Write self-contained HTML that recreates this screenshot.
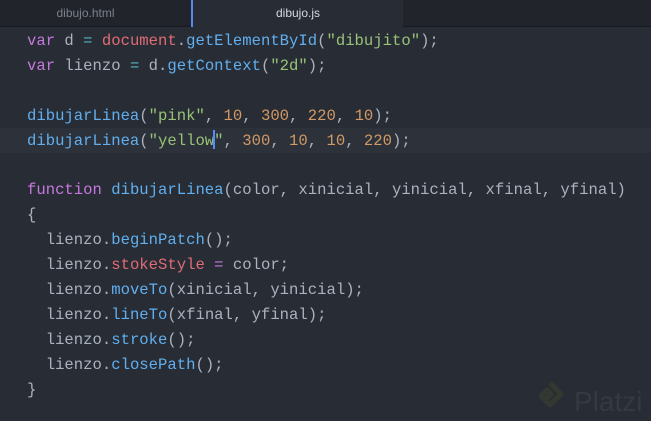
<!DOCTYPE html>
<html><head><style>
body{margin:0;width:651px;height:421px;background:#282c34;overflow:hidden;position:relative;font-family:"Liberation Mono",monospace}
.tabs{position:absolute;top:0;left:0;width:651px;height:26px;background:#21252b;border-bottom:1px solid #181a1f}
.t1{position:absolute;left:0;top:0;width:191px;height:26px;color:#7a818d;font:12px "Liberation Sans",sans-serif;line-height:26px;text-align:center;padding-right:20px;box-sizing:border-box}
.dot{position:absolute;left:220px;top:9px;width:7px;height:7px;border-radius:50%;background:#5b8ff0}
.t2{position:absolute;left:191px;top:0;width:212px;height:27px;background:#282c34;border-left:2px solid #568af2;color:#d7dae0;font:12px "Liberation Sans",sans-serif;line-height:26px;text-align:center;box-sizing:border-box}
.code{position:absolute;left:27px;top:29px;font-size:15.6px;line-height:24.9px;color:#abb2bf;white-space:pre}
.hl{position:absolute;left:0;top:128px;width:651px;height:25px;background:#2c313a}
.k{color:#c678dd}.f{color:#61afef}.s{color:#98c379}.n{color:#d19a66}.r{color:#e06c75}.o{color:#56b6c2}
.cur{display:inline-block;width:2px;height:19px;background:#528bff;vertical-align:-4px;margin:0 -1px}
.logo{position:absolute;color:#343942;font:28px "Liberation Sans",sans-serif}
</style></head><body>
<div class="tabs"><div class="t1">dibujo.html</div><div class="dot"></div><div class="t2">dibujo.js</div></div>
<div class="hl"></div>
<div class="code"><span class="k">var</span> d <span class="o">=</span> <span class="r">document</span>.<span class="f">getElementById</span>(<span class="s">"dibujito"</span>);
<span class="k">var</span> lienzo <span class="o">=</span> d.<span class="f">getContext</span>(<span class="s">"2d"</span>);

<span class="f">dibujarLinea</span>(<span class="s">"pink"</span>, <span class="n">10</span>, <span class="n">300</span>, <span class="n">220</span>, <span class="n">10</span>);
<span class="f">dibujarLinea</span>(<span class="s">"yellow<span class="cur"></span>"</span>, <span class="n">300</span>, <span class="n">10</span>, <span class="n">10</span>, <span class="n">220</span>);

<span class="k">function</span> <span class="f">dibujarLinea</span>(color, xinicial, yinicial, xfinal, yfinal)
{
  lienzo.<span class="f">beginPatch</span>();
  lienzo.<span class="r">stokeStyle</span> <span class="k">=</span> color;
  lienzo.<span class="f">moveTo</span>(xinicial, yinicial);
  lienzo.<span class="f">lineTo</span>(xfinal, yfinal);
  lienzo.<span class="f">stroke</span>();
  lienzo.<span class="f">closePath</span>();
}</div>
<svg style="position:absolute;left:536px;top:380px" width="28" height="34" viewBox="0 0 28 34"><path d="M14 3 L25 14 L14 25 L9 20 L15 14 L11 10 L5 16 L12 23" fill="none" stroke="#333930" stroke-width="5" stroke-linejoin="round"/></svg>
<div class="logo" style="left:574px;top:386px">Platzi</div>
</body></html>
